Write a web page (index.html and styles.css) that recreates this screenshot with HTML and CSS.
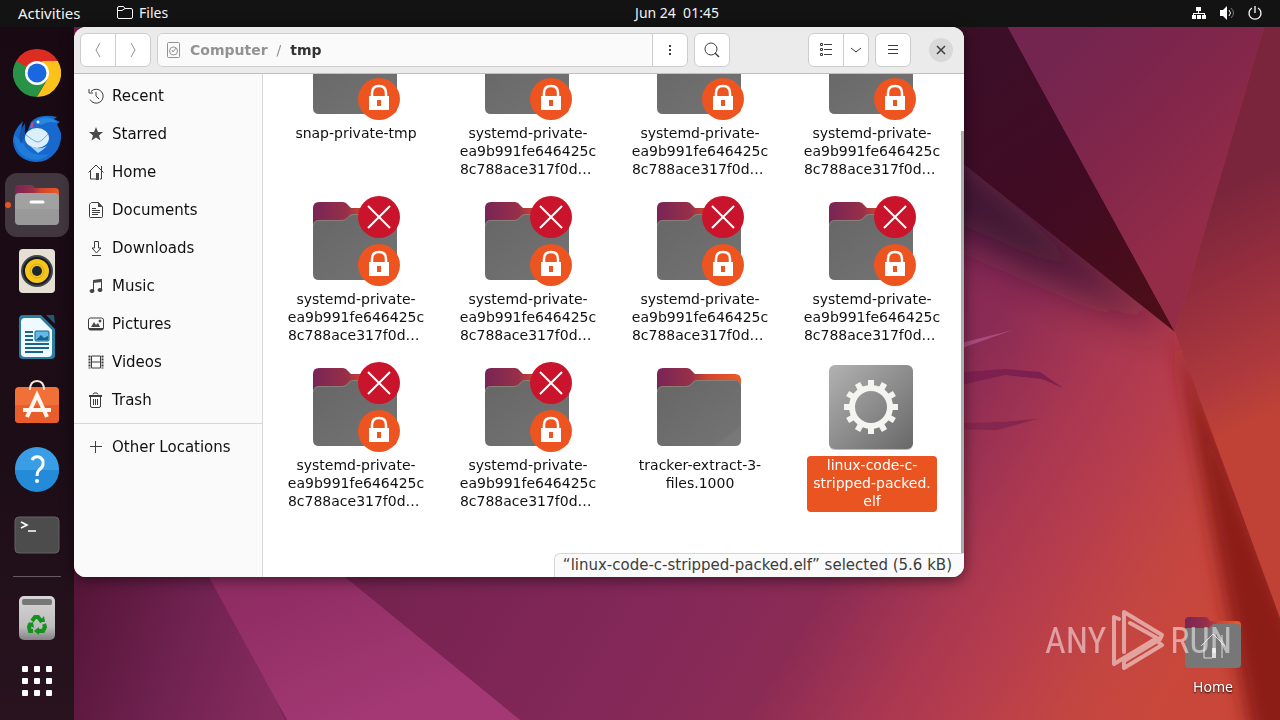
FILE: index.html
```html
<!DOCTYPE html>
<html lang="en">
<head>
<meta charset="utf-8">
<title>tmp - Files</title>
<link rel="stylesheet" href="styles.css">
</head>
<body>

<!-- shared shapes -->
<svg class="defs" width="0" height="0" aria-hidden="true">
    <defs>
        <linearGradient id="tab" x1="0" y1="0" x2="1" y2="0">
            <stop offset="0" stop-color="#782556"/>
            <stop offset=".4" stop-color="#982f48"/>
            <stop offset=".6" stop-color="#d0452f"/>
            <stop offset="1" stop-color="#ee5a24"/>
        </linearGradient>
        <linearGradient id="front" x1="0" y1="0" x2="1" y2="1">
            <stop offset="0" stop-color="#666"/>
            <stop offset=".84" stop-color="#727272"/>
            <stop offset=".85" stop-color="#777"/>
            <stop offset="1" stop-color="#7a7a7a"/>
        </linearGradient>
        <linearGradient id="steel" x1="0" y1="0" x2="1" y2="1">
            <stop offset="0" stop-color="#b2b2b2"/>
            <stop offset="1" stop-color="#686868"/>
        </linearGradient>
    </defs>
    <symbol id="folder" viewBox="0 0 96 96">
        <path d="M5 14q0-6 6-6h24q3 0 5 3l3 3h40q6 0 6 6v60H5z" fill="url(#tab)"/>
        <path d="M5 32q0-6 6-6h23q3 0 5-2l3-3q1-1 4-1h37q6 0 6 6v54q0 6-6 6H11q-6 0-6-6z" fill="url(#front)"/>
        <path d="M5.500 32q0-5.500 5.500-5.500h23q3 0 5-2l3-3q1-1 4-1h37q5.500 0 5.500 5.500" fill="none" stroke="#8a8078" stroke-width="1"/>
    </symbol>
    <symbol id="lock" viewBox="0 0 96 96">
        <circle cx="71" cy="71" r="21" fill="#ee5420"/>
        <path d="M64 69v-4q0-7 7-7t7 7v4" fill="none" stroke="#fff" stroke-width="2.500"/>
        <path d="M61 68h20v14H61zM69 72v6h4v-6z" fill="#fff" fill-rule="evenodd"/>
    </symbol>
    <symbol id="denied" viewBox="0 0 96 96">
        <circle cx="71" cy="23" r="21" fill="#c9142b"/>
        <path d="M60 12l22 22M82 12L60 34" stroke="#fff" stroke-width="2"/>
    </symbol>
</svg>

<svg class="wallpaper" viewBox="0 0 1280 720" preserveAspectRatio="xMidYMid slice" aria-hidden="true">
    <defs>
        <linearGradient id="base" gradientUnits="userSpaceOnUse" x1="509" y1="318" x2="1154" y2="721">
            <stop offset="0" stop-color="#74224f"/>
            <stop offset=".38" stop-color="#842859"/>
            <stop offset=".54" stop-color="#8a2b54"/>
            <stop offset=".69" stop-color="#aa3751"/>
            <stop offset=".8" stop-color="#b83e4b"/>
            <stop offset=".9" stop-color="#c44642"/>
            <stop offset="1" stop-color="#c9473a"/>
        </linearGradient>
        <linearGradient id="left" gradientUnits="userSpaceOnUse" x1="74" y1="600" x2="280" y2="670">
            <stop offset="0" stop-color="#561638"/>
            <stop offset=".5" stop-color="#6e214f"/>
            <stop offset="1" stop-color="#852b5e"/>
        </linearGradient>
        <linearGradient id="band" gradientUnits="userSpaceOnUse" x1="300" y1="577" x2="360" y2="720">
            <stop offset="0" stop-color="#902d63"/>
            <stop offset="1" stop-color="#a33874"/>
        </linearGradient>
        <linearGradient id="dark" gradientUnits="userSpaceOnUse" x1="970" y1="60" x2="1150" y2="320">
            <stop offset="0" stop-color="#3c0e27"/>
            <stop offset=".5" stop-color="#400b23"/>
            <stop offset="1" stop-color="#4c0e18"/>
        </linearGradient>
        <linearGradient id="top" gradientUnits="userSpaceOnUse" x1="1060" y1="60" x2="1210" y2="220">
            <stop offset="0" stop-color="#74254f"/>
            <stop offset=".5" stop-color="#82264a"/>
            <stop offset="1" stop-color="#942c48"/>
        </linearGradient>
        <linearGradient id="side" gradientUnits="userSpaceOnUse" x1="1200" y1="200" x2="1300" y2="400">
            <stop offset="0" stop-color="#7a253b"/>
            <stop offset=".4" stop-color="#962e3e"/>
            <stop offset=".8" stop-color="#b03a3c"/>
            <stop offset="1" stop-color="#c04236"/>
        </linearGradient>
        <!-- the two folds cast a soft shadow on one side only -->
        <clipPath id="below"><path d="M700-45L1175 332V720H700z"/></clipPath>
        <clipPath id="beside"><path d="M1175 332L1280 618V720H1000V332z"/></clipPath>
        <filter id="soft" x="-20%" y="-20%" width="140%" height="140%"><feGaussianBlur stdDeviation="20"/></filter>
        <filter id="softer" x="-50%" y="-20%" width="200%" height="140%"><feGaussianBlur stdDeviation="9"/></filter>
    </defs>
    <rect width="1280" height="720" fill="url(#base)"/>
    <path d="M0 400H145L285 720H0z" fill="url(#left)"/>
    <path d="M160 400H250L345 577 520 720H287L209 577z" fill="url(#band)"/>
    <g clip-path="url(#below)"><path d="M1175 332L700-90V125z" fill="#37122e" opacity=".9" filter="url(#soft)"/></g>
    <path d="M700 0H993L1175 332 700-45z" fill="url(#dark)"/>
    <path d="M993 0H1272L1175 332z" fill="url(#top)"/>
    <path d="M1272 0H1280V620L1175 332z" fill="url(#side)"/>
    <g clip-path="url(#beside)"><path d="M1175 332L1340 740H1252z" fill="#8c1d16" filter="url(#softer)"/></g>
    <path d="M900 366l65-24 48-12-48 17-65 30z" fill="#a94b7c"/>
    <path d="M900 382l65-10 40-3 35 3 23 16-21-9-37-4-40 9-65 14z" fill="#7d2050"/>
    <path d="M900 420l65 3 37-1 35-3-40 11-97-2z" fill="#85264f"/>
</svg>

<div class="desktop">
    <header class="topbar">
        <button class="activities">Activities</button>
        <div class="app-menu">
            <svg width="16" height="16" viewBox="0 0 16 16" fill="none" stroke="#fff"><path d="M.5 12V3q0-1.500 1.500-1.500h4.500L8 3.500h6q1.500 0 1.500 1.500v7q0 1.500-1.500 1.500H2Q.5 13.500.5 12zM.5 5.500H5L8 3.500"/></svg>
            <span>Files</span>
        </div>
        <time class="clock">Jun 24&nbsp; 01:45</time>
        <div class="status">
            <svg width="16" height="16" viewBox="0 0 16 16" fill="#fff"><path d="M5 2h5v4H5zM1 10h4v4H1zM11 10h4v4h-4zM7 6h1v2h6v2h-1V9H3v1H2V8h5zM6 10h4v4H6z"/></svg>
            <svg width="16" height="16" viewBox="0 0 16 16"><path d="M1 5h3l4-4v14l-4-4H1z" fill="#fff"/><path d="M10 5q3 3 0 6" fill="none" stroke="#fff"/><path d="M12 3q5 5 0 10" fill="none" stroke="#777"/></svg>
            <svg width="16" height="16" viewBox="0 0 16 16" fill="none" stroke="#fff" stroke-width="1.300"><path d="M5 3a6 6 0 1 0 6 0M8 1v7"/></svg>
        </div>
    </header>

    <div class="screen">
        <nav class="dock">
            <a href="#" aria-label="Google Chrome">
                <svg width="48" height="48" viewBox="0 0 48 48"><path d="M24 24L3.200 12A24 24 0 0 1 44.800 12z" fill="#dd2c22"/><path d="M24 24L3.200 12A24 24 0 0 0 24 48L34 30z" fill="#289346"/><path d="M24 12H44.800A24 24 0 0 1 24 48L34.400 30z" fill="#fcc21b"/><path d="M3.200 12L14 30h12z" fill="#289346"/><path d="M3.200 12L10 8l20 4-16 10z" fill="#dd2c22"/><path d="M3.200 12L14 30 24 24z" fill="#289346"/><circle cx="24" cy="24" r="12" fill="#fff"/><circle cx="24" cy="24" r="9.500" fill="#1a67e0"/></svg>
            </a>
            <a href="#" aria-label="Thunderbird">
                <svg width="48" height="48" viewBox="0 0 48 48"><path d="M10 6Q-1 17 0 27 2 42 16 46 32 50 42 38 49 29 48 18L44 9l3-2-6-3 3-2Q26-2 18 7l-3 8-5 8Q7 15 10 6z" fill="#1769cd"/><path d="M1 20q0 16 13 23 12 5 23-4-20 4-27-11z" fill="#1f7cdb"/><path d="M12 8q-9 12-4 21l4-8z" fill="#1653a8"/><path d="M20 7l8-4q10-2 17 5-9-3-17 2z" fill="#2688e0"/><path d="M17 13l2-6 7 5z" fill="#c6508f"/><path d="M20 9l4-3 3 4-7 5z" fill="#1b6ccc"/><circle cx="25" cy="7" r="1.500" fill="#dff"/><ellipse cx="24" cy="23" rx="12" ry="10" fill="#dcf0fc"/><path d="M13 20q9 7 12 7t10-8" fill="none" stroke="#7ba6cd"/><path d="M16 30q8 6 18 1-5 5-9 7z" fill="#a3d2f7"/></svg>
            </a>
            <a href="#" class="running" aria-label="Files">
                <svg width="48" height="48" viewBox="0 0 48 48"><path d="M2 8q0-4 4-4h12q2 0 4 3h20q4 0 4 4v18H2z" fill="url(#tab)"/><rect x="2" y="12" width="44" height="32" rx="4" fill="#999"/><path d="M2 18q0-6 5-6h34q5 0 5 6v10H2z" fill="#aaa" opacity=".5"/><path d="M18 21h12" stroke="#fff" stroke-width="3" stroke-linecap="round"/></svg>
            </a>
            <a href="#" aria-label="Rhythmbox">
                <svg width="48" height="48" viewBox="0 0 48 48"><rect x="6" y="2" width="36" height="44" rx="4" fill="#e5dfd4"/><circle cx="24" cy="24" r="16" fill="#41464c"/><circle cx="24" cy="24" r="13" fill="#f6c61d" stroke="#181b20" stroke-width="2"/><circle cx="24" cy="24" r="7" fill="none" stroke="#d9aa14" stroke-width="1"/><circle cx="24" cy="24" r="5" fill="#1d2730"/></svg>
            </a>
            <a href="#" aria-label="LibreOffice Writer">
                <svg width="48" height="48" viewBox="0 0 48 48"><path d="M10 2h18l14 14v26q0 4-4 4H10q-4 0-4-4V6q0-4 4-4z" fill="#2b7da0"/><path d="M33 2h8l1 9z" fill="#225a76"/><path d="M12 5h15l12 12v23q0 4-4 4H12q-4 0-4-4V9q0-4 4-4z" fill="#eefaff"/><path d="M12 19h8M12 23h8M12 27h8M12 31h24M12 35h24M12 39h18" stroke="#17658a" stroke-width="2"/><rect x="22" y="18" width="14" height="10" rx="1" fill="#64b9e9" stroke="#17658a"/><path d="M23 27l5-5 3 3 4-2v4z" fill="#17658a"/></svg>
            </a>
            <a href="#" aria-label="Ubuntu Software">
                <svg width="48" height="48" viewBox="0 0 48 48"><rect x="2" y="8" width="44" height="36" rx="4" fill="#f07038"/><path d="M2 26h44v14q0 4-4 4H6q-4 0-4-4z" fill="#e95d2b"/><path d="M17 11q0-9 7-9t7 9" fill="none" stroke="#f7e6dc" stroke-width="2"/><path d="M14 38l10-22 10 22M10 31h28" fill="none" stroke="#fff6ef" stroke-width="4"/></svg>
            </a>
            <a href="#" aria-label="Help">
                <svg width="48" height="48" viewBox="0 0 48 48"><circle cx="24" cy="24" r="22" fill="#3a9ee6"/><path d="M2 25h44a22 22 0 0 1-44 0z" fill="#248bd8"/><path d="M19 15q2-4 7-3 5 2 4 7 0 3-4 6-2 2-2 6" fill="none" stroke="#fff" stroke-width="3"/><circle cx="24" cy="36" r="2" fill="#fff"/></svg>
            </a>
            <a href="#" aria-label="Terminal">
                <svg width="48" height="48" viewBox="0 0 48 48"><rect x="2" y="6" width="44" height="36" rx="4" fill="#4c4c4c" stroke="#626262"/><path d="M8 11l6 3-6 3M15 20h8" fill="none" stroke="#fff" stroke-width="1.600"/></svg>
            </a>
            <hr>
            <a href="#" aria-label="Trash">
                <svg width="48" height="48" viewBox="0 0 48 48"><defs><linearGradient id="bin" x2="0" y2="1"><stop offset="0" stop-color="#d6d6d6"/><stop offset=".7" stop-color="#bdbdbd"/><stop offset="1" stop-color="#858085"/></linearGradient></defs><rect x="6" y="2" width="36" height="44" rx="5" fill="url(#bin)"/><rect x="9" y="5" width="30" height="6" rx="2" fill="#777"/><g fill="none" stroke="#16911d" stroke-width="4"><path d="M19 27l3-4h3l4 5M31 30l1 3-2 4h-6M20 37h-3l-1-4 2-4"/></g><path d="M26 28h6l-1-6zM26 33v8l-5-4zM14 30l6-2 1 6z" fill="#16911d"/></svg>
            </a>
            <button aria-label="Show Applications">
                <svg width="32" height="32" viewBox="0 0 32 32" fill="#fff"><g id="dots"><rect x="1" y="1" width="6" height="6" rx="1"/><rect x="13" y="1" width="6" height="6" rx="1"/><rect x="25" y="1" width="6" height="6" rx="1"/></g><use href="#dots" y="12"/><use href="#dots" y="24"/></svg>
            </button>
        </nav>

        <main class="workspace">
            <section class="window">
                <div class="toolbar">
                    <div class="group">
                        <button class="dim" aria-label="Back"><svg width="16" height="16" viewBox="0 0 16 16"><path d="M10 1L6 8l4 7"/></svg></button>
                        <button class="dim" aria-label="Forward"><svg width="16" height="16" viewBox="0 0 16 16"><path d="M6 1l4 7-4 7"/></svg></button>
                    </div>
                    <div class="group pathbar">
                        <nav class="path">
                            <svg width="16" height="16" viewBox="0 0 16 16"><rect x="2.500" y=".5" width="12" height="15" rx="1"/><circle cx="8.500" cy="9" r="4"/><path d="M7 8l1 2 3-4"/></svg>
                            <a href="#">Computer</a><span>/</span><a href="#" class="current">tmp</a>
                        </nav>
                        <button aria-label="Folder menu"><svg width="16" height="16" viewBox="0 0 16 16"><path d="M8 3v2M8 7v2M8 11v2" stroke-width="2"/></svg></button>
                    </div>
                    <div class="group search">
                        <button aria-label="Search"><svg width="16" height="16" viewBox="0 0 16 16"><circle cx="7" cy="7" r="6"/><path d="M11 11l4 4" stroke-width="1.500"/></svg></button>
                    </div>
                    <div class="group">
                        <button aria-label="List view"><svg width="16" height="16" viewBox="0 0 16 16"><path d="M6 2.500h8M6 7.500h8M6 12.500h8M2.500 1.500h2v2h-2zM2.500 6.500h2v2h-2zM2.500 11.500h2v2h-2z"/></svg></button>
                        <button class="narrow" aria-label="View options"><svg width="16" height="16" viewBox="0 0 16 16"><path d="M3 6l5 4 5-4"/></svg></button>
                    </div>
                    <div class="group">
                        <button aria-label="Main menu"><svg width="16" height="16" viewBox="0 0 16 16"><path d="M3 3.500h10M3 7.500h10M3 11.500h10"/></svg></button>
                    </div>
                    <button class="close" aria-label="Close"><svg width="16" height="16" viewBox="0 0 16 16"><path d="M4 4l8 8M12 4l-8 8" stroke-width="1.500"/></svg></button>
                </div>

                <div class="content">
                    <nav class="sidebar">
                        <a href="#"><svg width="16" height="16" viewBox="0 0 16 16"><path d="M3 3.500a7 7 0 1 1-1 8M1 1v4h4M8 4v4l3 3"/></svg>Recent</a>
                        <a href="#"><svg width="16" height="16" viewBox="0 0 16 16"><path d="M8 1l2 5h5l-4 3.500 1.500 5L8 11.500l-4.500 3 1.500-5L1 6h5z" fill="#4a4a4a" stroke="none"/></svg>Starred</a>
                        <a href="#"><svg width="16" height="16" viewBox="0 0 16 16"><path d="M.5 8.500L8 1l7.500 7.500M2.500 7v8H8M13.500 7v8H12M13.500 2v4"/><path d="M8 9h3v7H8z" fill="#4a4a4a" stroke="none"/></svg>Home</a>
                        <a href="#"><svg width="16" height="16" viewBox="0 0 16 16"><path d="M2.500 1.500q-1 0-1 1v12q0 1 1 1h11q1 0 1-1V5l-4-4.500h-7zM4 6.500h4M4 8.500h8M4 10.500h8M4 12.500h6"/><path d="M10 0v5h5z" fill="#4a4a4a" stroke="none"/></svg>Documents</a>
                        <a href="#"><svg width="16" height="16" viewBox="0 0 16 16"><path d="M6.500 1.500h4V8H13l-4.500 5L4 8h2.500zM4 15.500h9"/></svg>Downloads</a>
                        <a href="#"><svg width="16" height="16" viewBox="0 0 16 16"><path d="M5.500 13V3l8-1.500V12"/><path d="M5 2l9-1v3L5 5z" fill="#4a4a4a" stroke="none"/><ellipse cx="4" cy="13" rx="2" ry="1.500" fill="#4a4a4a"/><ellipse cx="12" cy="12" rx="2" ry="1.500" fill="#4a4a4a"/></svg>Music</a>
                        <a href="#"><svg width="16" height="16" viewBox="0 0 16 16"><rect x=".5" y="2" width="15" height="12" rx="2"/><path d="M1 13h14" stroke-width="2"/><path d="M3 11l3-5 2 3 2-2 2 4z" fill="#4a4a4a" stroke="none"/><circle cx="12" cy="5" r="1" fill="#4a4a4a"/></svg>Pictures</a>
                        <a href="#"><svg width="16" height="16" viewBox="0 0 16 16"><path d="M1.500 1.500v13M14.500 1.500v13" stroke-width="2" stroke-dasharray="2 1"/><path d="M3.500 2v12h9V2zM3.500 8h9"/></svg>Videos</a>
                        <a href="#"><svg width="16" height="16" viewBox="0 0 16 16"><path d="M2.500 5v9q0 1.500 1.500 1.500h7q1.500 0 1.500-1.500V5M5.500 7v6M7.500 7v6M9.500 7v6M5 2.500l1-1.500h3l1 1.500"/><path d="M1 4h13" stroke-width="2"/></svg>Trash</a>
                        <hr>
                        <a href="#"><svg width="16" height="16" viewBox="0 0 16 16"><path d="M2 7.500h12M7.500 2v12"/></svg>Other Locations</a>
                    </nav>

                    <div class="view">
                        <ul class="files">
                            <li><svg class="icon" viewBox="0 0 96 96"><use href="#folder"/><use href="#denied"/><use href="#lock"/></svg><span>snap-private-tmp</span></li>
                            <li><svg class="icon" viewBox="0 0 96 96"><use href="#folder"/><use href="#denied"/><use href="#lock"/></svg><span>systemd-private-<br>ea9b991fe646425c<br>8c788ace317f0d…&nbsp;</span></li>
                            <li><svg class="icon" viewBox="0 0 96 96"><use href="#folder"/><use href="#denied"/><use href="#lock"/></svg><span>systemd-private-<br>ea9b991fe646425c<br>8c788ace317f0d…&nbsp;</span></li>
                            <li><svg class="icon" viewBox="0 0 96 96"><use href="#folder"/><use href="#denied"/><use href="#lock"/></svg><span>systemd-private-<br>ea9b991fe646425c<br>8c788ace317f0d…&nbsp;</span></li>
                            <li><svg class="icon" viewBox="0 0 96 96"><use href="#folder"/><use href="#denied"/><use href="#lock"/></svg><span>systemd-private-<br>ea9b991fe646425c<br>8c788ace317f0d…&nbsp;</span></li>
                            <li><svg class="icon" viewBox="0 0 96 96"><use href="#folder"/><use href="#denied"/><use href="#lock"/></svg><span>systemd-private-<br>ea9b991fe646425c<br>8c788ace317f0d…&nbsp;</span></li>
                            <li><svg class="icon" viewBox="0 0 96 96"><use href="#folder"/><use href="#denied"/><use href="#lock"/></svg><span>systemd-private-<br>ea9b991fe646425c<br>8c788ace317f0d…&nbsp;</span></li>
                            <li><svg class="icon" viewBox="0 0 96 96"><use href="#folder"/><use href="#denied"/><use href="#lock"/></svg><span>systemd-private-<br>ea9b991fe646425c<br>8c788ace317f0d…&nbsp;</span></li>
                            <li><svg class="icon" viewBox="0 0 96 96"><use href="#folder"/><use href="#denied"/><use href="#lock"/></svg><span>systemd-private-<br>ea9b991fe646425c<br>8c788ace317f0d…&nbsp;</span></li>
                            <li><svg class="icon" viewBox="0 0 96 96"><use href="#folder"/><use href="#denied"/><use href="#lock"/></svg><span>systemd-private-<br>ea9b991fe646425c<br>8c788ace317f0d…&nbsp;</span></li>
                            <li><svg class="icon" viewBox="0 0 96 96"><use href="#folder"/></svg><span>tracker-extract-3-<br>files.1000</span></li>
                            <li class="selected">
                                <svg class="icon" viewBox="0 0 96 96">
                                    <rect x="5" y="6" width="84" height="84" rx="6" fill="#bbb"/>
                                    <rect x="5" y="5" width="84" height="84" rx="6" fill="url(#steel)"/>
                                    <circle cx="47" cy="47" r="19" fill="none" stroke="#f4f4f0" stroke-width="6"/>
                                    <g stroke="#f4f4f0" stroke-width="6">
                                        <path d="M47 20v8M47 66v8M20 47h8M66 47h8"/>
                                        <path d="M47 20v8M47 66v8M20 47h8M66 47h8" transform="rotate(30 47 47)"/>
                                        <path d="M47 20v8M47 66v8M20 47h8M66 47h8" transform="rotate(60 47 47)"/>
                                    </g>
                                </svg>
                                <span>linux-code-c-<br>stripped-packed.<br>elf</span>
                            </li>
                        </ul>
                        <div class="scrollbar"></div>
                        <div class="statusbar">“linux-code-c-stripped-packed.elf” selected (5.6 kB)</div>
                    </div>
                </div>
            </section>

            <a href="#" class="shortcut">
                <svg width="64" height="64" viewBox="0 0 64 64"><path d="M4 11q0-4 4-4h16q3 0 5 4h27q4 0 4 4v20H4z" fill="url(#tab)"/><path d="M4 18h24l4-4h24q4 0 4 4v36q0 4-4 4H8q-4 0-4-4z" fill="#777"/><path d="M20 36l12-12 12 12M23 33v15h8M41 33v15M41 25v7" fill="none" stroke="#ddd"/><path d="M31 38h4v10h-4z" fill="#ddd"/></svg>
                <span>Home</span>
            </a>
            <div class="watermark">
                <span>ANY</span>
                <svg width="56" height="64" viewBox="0 0 56 64" fill="none" stroke="#fff" stroke-width="4" stroke-linejoin="round" stroke-linecap="round"><path d="M9 10L4 8v47l43-26L20 14M14 43V3l38 23-2 4M14 59l38-23-5-4L14 52v7"/></svg>
                <span>RUN</span>
            </div>
        </main>
    </div>
</div>

</body>
</html>
```

FILE: styles.css
```css
* {
    box-sizing: border-box;
}
body {
    margin: 0;
    font-family: "DejaVu Sans", sans-serif;
    font-size: 14px;
    color: #111;
    overflow: hidden;
}
svg {
    display: block;
    flex: none;
}
a {
    color: inherit;
    text-decoration: none;
}
button {
    border: 0;
    padding: 0;
    background: none;
    color: inherit;
    font: inherit;
}
.defs {
    position: absolute;
}
.wallpaper {
    position: fixed;
    inset: 0;
    width: 100%;
    height: 100%;
}
.desktop {
    position: relative;
    display: flex;
    flex-direction: column;
    height: 100vh;
}

/* top bar */
.topbar {
    display: grid;
    grid-template-columns: 74px 1fr auto 1fr;
    align-items: center;
    height: 27px;
    padding-bottom: 2px;
    background: #131313;
    color: #f2f2f2;
    font-family: "Noto Sans", sans-serif;
}
.activities {
    padding-left: 18px;
    font-size: 15px;
    text-align: left;
    white-space: nowrap;
}
.app-menu {
    display: flex;
    align-items: center;
    gap: 6px;
    padding-left: 43px;
}
.status {
    display: flex;
    justify-content: flex-end;
    gap: 12px;
    padding-right: 17px;
}
.screen {
    display: flex;
    flex: 1;
    min-height: 0;
}

/* dock */
.dock {
    display: flex;
    flex-direction: column;
    align-items: center;
    gap: 2px;
    width: 74px;
    padding-top: 14px;
    background: linear-gradient(#190912, #1c0d16 60%, #28131f);
}
.dock a, .dock button {
    position: relative;
    display: flex;
    align-items: center;
    justify-content: center;
    flex: none;
    width: 64px;
    height: 64px;
    border-radius: 12px;
}
.dock button {
    height: 58px;
}
.dock .running {
    background: #42373e;
}
.dock .running::before {
    content: "";
    position: absolute;
    left: 0;
    top: 29px;
    width: 6px;
    height: 6px;
    border-radius: 3px;
    background: #e95420;
}
.dock hr {
    width: 48px;
    height: 1px;
    margin: 7px 0;
    border: 0;
    background: #655b61;
}

/* desktop area */
.workspace {
    position: relative;
    display: flex;
    flex: 1;
    padding: 0 316px 143px 0;
}
.window {
    display: flex;
    flex-direction: column;
    flex: 1;
    min-width: 0;
    overflow: hidden;
    border-radius: 12px;
    background: #fff;
    box-shadow: 0 3px 14px rgba(0, 0, 0, .5);
}
.toolbar {
    display: flex;
    align-items: center;
    gap: 6px;
    height: 47px;
    padding: 0 11px 0 6px;
    border-bottom: 1px solid #bfbfbf;
    background: #ebebeb;
}
.toolbar svg, .sidebar svg {
    fill: none;
    stroke: #3d3d3d;
}
.group {
    display: flex;
    height: 34px;
    overflow: hidden;
    border: 1px solid #cdcdcd;
    border-radius: 6px;
    background: #fff;
}
.group button {
    display: flex;
    align-items: center;
    justify-content: center;
    width: 34px;
}
.group button + button, .path + button {
    width: 35px;
    border-left: 1px solid #cdcdcd;
}
.group .narrow {
    width: 25px;
}
.group .dim svg, .path svg {
    stroke: #929292;
}
.pathbar {
    flex: 1;
}
.path {
    display: flex;
    flex: 1;
    align-items: center;
    gap: 9px;
    padding-left: 7px;
    background: #fafafa;
    color: #929292;
    font-weight: bold;
}
.path span {
    font-weight: normal;
}
.path .current {
    color: #333;
}
.search {
    margin-right: 72px;
}
.close {
    display: flex;
    align-items: center;
    justify-content: center;
    width: 24px;
    height: 24px;
    margin-left: 12px;
    border-radius: 12px;
    background: #d9d9d9;
}
.content {
    display: flex;
    flex: 1;
    min-height: 0;
}

/* sidebar */
.sidebar {
    width: 189px;
    padding-top: 3px;
    border-right: 1px solid #d8d8d8;
    background: #fafafa;
    font-size: 15px;
}
.sidebar a {
    display: flex;
    align-items: center;
    gap: 8px;
    height: 38px;
    padding-left: 14px;
}
.sidebar hr {
    height: 1px;
    margin: 4px 0;
    border: 0;
    background: #d8d8d8;
}

/* icon view, scrolled to the end */
.view {
    position: relative;
    display: flex;
    flex: 1;
    flex-direction: column;
    justify-content: flex-end;
    overflow: hidden;
}
.files {
    display: grid;
    grid-template-columns: repeat(4, 1fr);
    gap: 16px 0;
    margin: 0;
    padding: 0 6px 67px 7px;
    list-style: none;
}
.files li {
    display: flex;
    flex-direction: column;
    align-items: center;
    height: 150px;
    text-align: center;
    line-height: 18px;
}
.icon {
    width: 96px;
    height: 96px;
}
.selected span {
    padding: 0 6px 2px;
    border-radius: 4px;
    background: #ea5420;
    color: #fff;
}
.scrollbar {
    position: absolute;
    top: 57px;
    right: 0;
    bottom: 24px;
    width: 3px;
    background: #a9abac;
}
.statusbar {
    position: absolute;
    right: 0;
    bottom: 0;
    height: 24px;
    padding: 0 12px 0 8px;
    border: 1px solid #d5d5d5;
    border-width: 1px 0 0 1px;
    border-radius: 6px 0 0 0;
    background: #fafafa;
    color: #3d3d3d;
    font-size: 15px;
    line-height: 23px;
}

/* things lying on the desktop */
.shortcut {
    position: absolute;
    right: 35px;
    bottom: 20px;
    display: flex;
    flex-direction: column;
    align-items: center;
    color: #fff;
    font-family: "Noto Sans", sans-serif;
    line-height: 26px;
    text-shadow: 0 1px 2px #000;
}
.watermark {
    position: absolute;
    right: 48px;
    bottom: 47px;
    display: flex;
    align-items: center;
    gap: 4px;
    color: #fff;
    font-family: "Roboto Condensed", "Liberation Sans Narrow", "Roboto", sans-serif;
    font-size: 36px;
    line-height: 64px;
    opacity: .5;
}
```
